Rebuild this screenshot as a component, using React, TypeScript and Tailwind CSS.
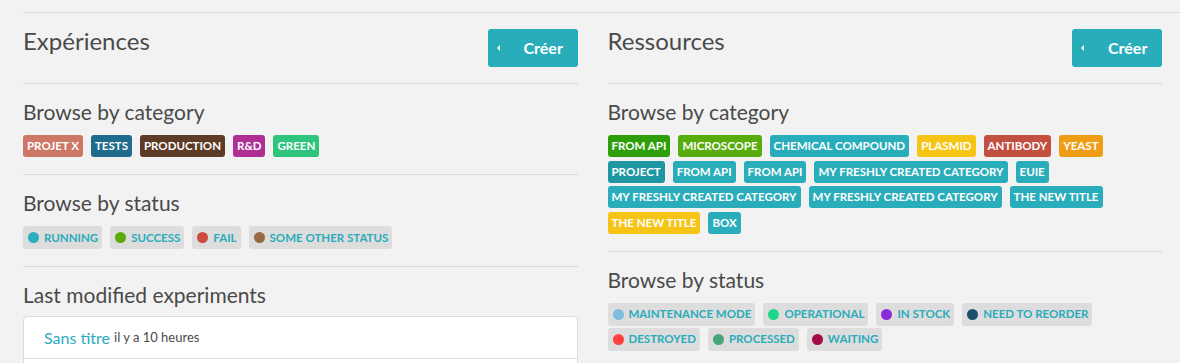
import React from "react";

type Tag = { label: string; color: string };
type Status = { label: string; dot: string };

const expCategories: Tag[] = [
  { label: "Projet X", color: "bg-[#cd7767]" },
  { label: "Tests", color: "bg-[#1f6a8d]" },
  { label: "Production", color: "bg-[#5e3b27]" },
  { label: "R&D", color: "bg-[#af2f94]" },
  { label: "Green", color: "bg-[#2ec47d]" },
];

const expStatus: Status[] = [
  { label: "Running", dot: "bg-[#27aebf]" },
  { label: "Success", dot: "bg-[#58ac0c]" },
  { label: "Fail", dot: "bg-[#cb4b3d]" },
  { label: "Some other status", dot: "bg-[#996a42]" },
];

const resCategories: Tag[] = [
  { label: "From API", color: "bg-[#2f9e0b]" },
  { label: "Microscope", color: "bg-[#59ac0d]" },
  { label: "Chemical compound", color: "bg-[#2aadbb]" },
  { label: "Plasmid", color: "bg-[#f6c414]" },
  { label: "Antibody", color: "bg-[#c34f40]" },
  { label: "Yeast", color: "bg-[#ef9c16]" },
  { label: "Project", color: "bg-[#1e97a2]" },
  { label: "From API", color: "bg-[#2aadbb]" },
  { label: "From API", color: "bg-[#2aadbb]" },
  { label: "My freshly created category", color: "bg-[#2aadbb]" },
  { label: "euie", color: "bg-[#2aadbb]" },
  { label: "My freshly created category", color: "bg-[#2aadbb]" },
  { label: "My freshly created category", color: "bg-[#2aadbb]" },
  { label: "The new title", color: "bg-[#2aadbb]" },
  { label: "The new title", color: "bg-[#f6c414]" },
  { label: "Box", color: "bg-[#2aadbb]" },
];

const resStatus: Status[] = [
  { label: "Maintenance mode", dot: "bg-[#7dbbe0]" },
  { label: "Operational", dot: "bg-[#1fd68b]" },
  { label: "In stock", dot: "bg-[#8a2bd9]" },
  { label: "Need to reorder", dot: "bg-[#1e4e6e]" },
  { label: "Destroyed", dot: "bg-[#fd4040]" },
  { label: "Processed", dot: "bg-[#4aa47b]" },
  { label: "Waiting", dot: "bg-[#a20c48]" },
];

function CreateButton() {
  return (
    <button className="flex items-center h-[38px] w-[90px] rounded-[3px] bg-[#2aadbb] pl-[9px] text-white">
      <span className="h-0 w-0 border-y-[3px] border-r-[3px] border-y-transparent border-r-white" />
      <span className="ml-[24px] text-[16px] font-bold leading-none">Créer</span>
    </button>
  );
}

function Section({ title, children, last }: { title: string; children: React.ReactNode; last?: boolean }) {
  return (
    <div className={`pt-[15px] ${last ? "" : "pb-[17px] border-b border-[#d9d9d9]"}`}>
      <h3 className="text-[21px] leading-[25px] text-[#4a4a4a] mb-[11px]">{title}</h3>
      {children}
    </div>
  );
}

function CategoryTags({ tags }: { tags: Tag[] }) {
  return (
    <div className="flex flex-wrap gap-x-[8px] gap-y-[3.5px]">
      {tags.map((t, i) => (
        <span
          key={i}
          className={`${t.color} h-[22px] px-[4px] rounded-[3px] flex items-center text-[11.5px] font-bold uppercase text-white`}
        >
          {t.label}
        </span>
      ))}
    </div>
  );
}

function StatusTags({ items }: { items: Status[] }) {
  return (
    <div className="flex flex-wrap gap-x-[8px] gap-y-[2px]">
      {items.map((s, i) => (
        <span
          key={i}
          className="h-[23px] pl-[5px] pr-[4px] rounded-[3px] bg-[#dddddd] flex items-center gap-[5px] text-[11.5px] font-bold uppercase text-[#2aacbb]"
        >
          <span className={`${s.dot} w-[11px] h-[11px] rounded-full`} />
          {s.label}
        </span>
      ))}
    </div>
  );
}

function Header({ title }: { title: string }) {
  return (
    <div className="flex items-start justify-between pt-[16px] pb-[16px] border-b border-[#d9d9d9]">
      <h2 className="text-[24px] leading-[24px] text-[#4a4a4a]">{title}</h2>
      <CreateButton />
    </div>
  );
}

export default function App() {
  return (
    <div className="h-[363px] bg-[#f2f2f2] font-['Lato',sans-serif] pl-[23px] overflow-hidden">
      <div className="h-[12px]" />
      <div className="border-t border-[#d9d9d9] pr-[18px]">
        <div className="grid grid-cols-2 gap-[30px]">
          <div>
            <Header title="Expériences" />
            <Section title="Browse by category">
              <CategoryTags tags={expCategories} />
            </Section>
            <Section title="Browse by status">
              <StatusTags items={expStatus} />
            </Section>
            <div className="pt-[15px]">
              <h3 className="text-[21px] leading-[25px] text-[#4a4a4a] mb-[9px]">Last modified experiments</h3>
              <div className="bg-white border border-[#dcdcdc] rounded-t-[4px]">
                <div className="h-[42px] pt-[1px] px-[20px] flex items-center border-b border-[#dcdcdc]">
                  <span className="text-[16px] text-[#2aacbb]">Sans titre</span>
                  <span className="ml-[4px] text-[13px] text-[#4a4a4a]">il y a 10 heures</span>
                </div>
                <div className="h-[42px]" />
              </div>
            </div>
          </div>
          <div>
            <Header title="Ressources" />
            <Section title="Browse by category">
              <CategoryTags tags={resCategories} />
            </Section>
            <Section title="Browse by status" last>
              <StatusTags items={resStatus} />
            </Section>
          </div>
        </div>
      </div>
    </div>
  );
}
